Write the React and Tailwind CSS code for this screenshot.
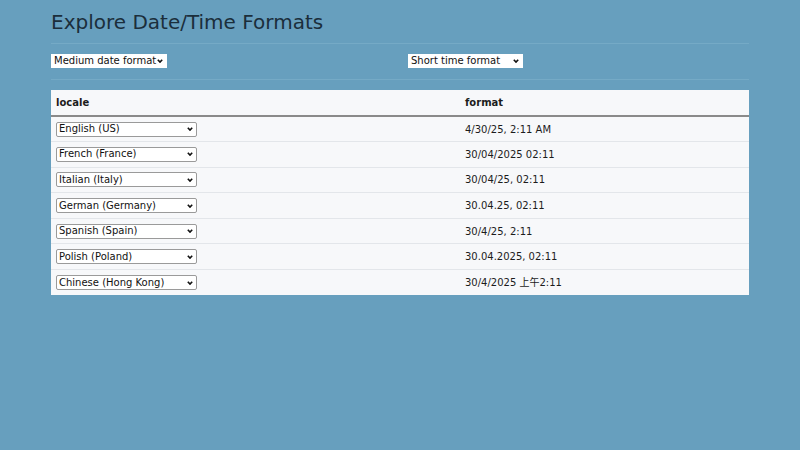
import React from "react";

const rows = [
  ["English (US)", "4/30/25, 2:11 AM"],
  ["French (France)", "30/04/2025 02:11"],
  ["Italian (Italy)", "30/04/25, 02:11"],
  ["German (Germany)", "30.04.25, 02:11"],
  ["Spanish (Spain)", "30/4/25, 2:11"],
  ["Polish (Poland)", "30.04.2025, 02:11"],
  ["Chinese (Hong Kong)", "30/4/2025 上午2:11"],
];

const locales = rows.map((r) => r[0]);

function Chevron() {
  return (
    <svg
      className="pointer-events-none absolute top-1/2 -translate-y-1/2 right-[4px]"
      width="6"
      height="5"
      viewBox="0 0 6 5"
    >
      <path d="M0.8 1.2 L3 3.5 L5.2 1.2" fill="none" stroke="#111" strokeWidth="1.6" />
    </svg>
  );
}

function Select({ width, bordered, options, value }) {
  return (
    <div className="relative inline-block align-top" style={{ width }}>
      <select
        className={
          "block w-full appearance-none bg-white text-[#111] text-[10px] leading-[12px] pr-[10px] outline-none " +
          (bordered
            ? "h-[15px] pl-[2px] border border-[#9a9a9a] rounded-[2px]"
            : "h-[14px] pl-[3px] border-0 rounded-none")
        }
        defaultValue={value}
      >
        {options.map((o) => (
          <option key={o} value={o}>
            {o}
          </option>
        ))}
      </select>
      <Chevron />
    </div>
  );
}

export default function App() {
  return (
    <div
      className="min-h-[450px] w-full bg-[#679fbe]"
      style={{ fontFamily: '"DejaVu Sans", "Noto Sans CJK TC", sans-serif' }}
    >
      <div className="mx-auto w-[698px] pt-[10px]">
        <h1 className="text-[20px] leading-[24px] text-[#1b2e3b] font-normal">
          Explore Date/Time Formats
        </h1>
        <div className="mt-[9px] h-px bg-[#5b91ae] border-b border-[#75aac6]" />
        <div className="grid grid-cols-2 gap-4 pt-[10px] pb-[11px]">
          <div className="flex">
            <Select
              width={116}
              value="Medium date format"
              options={["Full date format", "Long date format", "Medium date format", "Short date format"]}
            />
          </div>
          <div className="flex">
            <Select
              width={115}
              value="Short time format"
              options={["Full time format", "Long time format", "Medium time format", "Short time format"]}
            />
          </div>
        </div>
        <div className="h-px bg-[#5b91ae] border-b border-[#75aac6]" />
        <table className="mt-[10px] w-full bg-[#f7f8fa] text-[10px] text-[#1c1c1c] border-collapse">
          <thead>
            <tr className="border-b-2 border-[#8a8a8a]">
              <th className="w-[408px] h-[26px] text-left pl-[5px] font-bold align-middle">
                locale
              </th>
              <th className="h-[26px] text-left pl-[6px] font-bold align-middle">
                format
              </th>
            </tr>
          </thead>
          <tbody>
            {rows.map(([loc, fmt], i) => (
              <tr
                key={loc}
                className={i < rows.length - 1 ? "border-b border-[#e3e6ea]" : ""}
              >
                <td className="h-[25.6px] pl-[5px] align-middle">
                  <div className="flex">
                    <Select width={141} bordered value={loc} options={locales} />
                  </div>
                </td>
                <td className="h-[25.6px] pl-[6px] align-middle">{fmt}</td>
              </tr>
            ))}
          </tbody>
        </table>
      </div>
    </div>
  );
}
